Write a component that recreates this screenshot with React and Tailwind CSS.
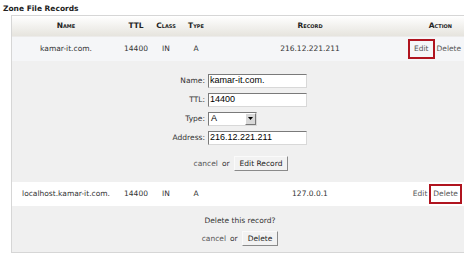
import React from "react";

const cols = "grid grid-cols-[108px_32px_28px_32px_196px_1fr] items-center";

function Field({ label, children }) {
  return (
    <div className="flex items-center h-[19px]">
      <div className="w-[96px] text-right pr-[3px]">{label}</div>
      {children}
    </div>
  );
}

function TextBox({ value }) {
  return (
    <div className="w-[99px] h-[14px] bg-white border border-t-[#7a7a7a] border-l-[#7a7a7a] border-r-[#d8d8d8] border-b-[#d8d8d8] flex items-center pl-[1px] text-[9px] text-black font-['Liberation_Sans',sans-serif]">
      {value}
    </div>
  );
}

function Button({ children }) {
  return (
    <div className="h-[15px] px-[5px] flex items-center bg-[#f2f2f2] border border-t-[#fafafa] border-l-[#fafafa] border-r-[#8a8a8a] border-b-[#8a8a8a] text-[#222]">
      {children}
    </div>
  );
}

export default function App() {
  return (
    <div className="w-[474px] h-[254px] bg-white text-[#333] text-[7.5px] font-['DejaVu_Sans',Verdana,sans-serif] overflow-hidden">
      <div className="pl-[3px] pt-[3px] h-[15px] font-bold text-[7.5px] text-[#222]">
        Zone File Records
      </div>
      <div className="ml-[11px] w-[453px] border-l border-t border-b border-[#d6d6d6]">
        {/* header */}
        <div className={`${cols} h-[21px] bg-gradient-to-b from-white to-[#e6e4de] font-bold text-[#222] [font-variant:small-caps] border-b border-[#ecebea]`}>
          <div className="text-center">Name</div>
          <div className="text-center">TTL</div>
          <div className="text-center">Class</div>
          <div className="text-center">Type</div>
          <div className="text-center">Record</div>
          <div className="text-right pr-[12px]">Action</div>
        </div>

        {/* row 1 */}
        <div className={`${cols} h-[24px] bg-[#f5f6f8]`}>
          <div className="text-center">kamar-it.com.</div>
          <div className="text-center">14400</div>
          <div className="text-center">IN</div>
          <div className="text-center">A</div>
          <div className="text-center">216.12.221.211</div>
          <div className="flex justify-end items-center pr-[3px] text-[#555]">
            <span className="border-2 border-[#b0141f] px-[4px] py-[2px]">Edit</span>
            <span className="ml-[2px]">Delete</span>
          </div>
        </div>

        {/* edit form */}
        <div className="bg-[#f0f0f0] h-[121px] pt-[10px]">
          <div className="ml-[100px]">
            <Field label="Name:">
              <TextBox value="kamar-it.com." />
            </Field>
            <Field label="TTL:">
              <TextBox value="14400" />
            </Field>
            <Field label="Type:">
              <div className="w-[49px] h-[14px] bg-white border border-t-[#7a7a7a] border-l-[#7a7a7a] border-r-[#d8d8d8] border-b-[#d8d8d8] flex items-center justify-between text-[9px] text-black font-['Liberation_Sans',sans-serif]">
                <span className="pl-[2px]">A</span>
                <span className="w-[11px] h-[12px] bg-[#d8d8d8] border border-t-white border-l-white border-r-[#777] border-b-[#777] flex items-center justify-center">
                  <svg width="5" height="3" viewBox="0 0 5 3">
                    <path d="M0 0h5L2.5 3z" fill="#000" />
                  </svg>
                </span>
              </div>
            </Field>
            <Field label="Address:">
              <TextBox value="216.12.221.211" />
            </Field>
          </div>
          <div className="flex items-center justify-center mt-[9px] pl-[6px] gap-[4px]">
            <span className="text-[#555]">cancel</span>
            <span>or</span>
            <Button>Edit Record</Button>
          </div>
        </div>

        {/* row 2 */}
        <div className={`${cols} h-[24px] bg-white`}>
          <div className="text-center">localhost.kamar-it.com.</div>
          <div className="text-center">14400</div>
          <div className="text-center">IN</div>
          <div className="text-center">A</div>
          <div className="text-center">127.0.0.1</div>
          <div className="flex justify-end items-center pr-[2px] text-[#555]">
            <span className="mr-[2px]">Edit</span>
            <span className="border-2 border-[#b0141f] px-[2px] py-[2px]">Delete</span>
          </div>
        </div>

        {/* delete confirm */}
        <div className="bg-[#f0f0f0] h-[46px] flex flex-col items-center pt-[9px]">
          <div className="pl-[4px]">Delete this record?</div>
          <div className="flex items-center gap-[4px] mt-[5px] pl-[4px]">
            <span className="text-[#555]">cancel</span>
            <span>or</span>
            <Button>Delete</Button>
          </div>
        </div>
      </div>
    </div>
  );
}
